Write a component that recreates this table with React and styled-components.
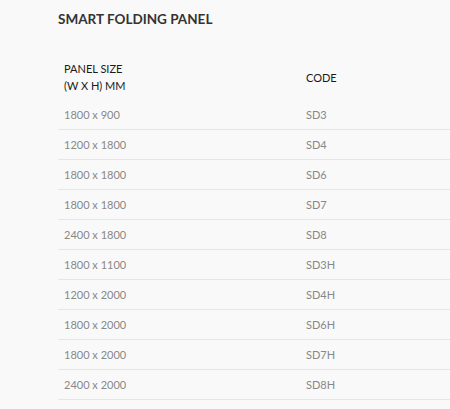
import React from 'react';
import styled, { createGlobalStyle } from 'styled-components';

const GlobalStyle = createGlobalStyle`
  html, body {
    margin: 0;
    padding: 0;
    background: #f9f9f9;
  }
  body {
    font-family: 'Lato', 'Liberation Sans', sans-serif;
  }
`;

const Section = styled.section`
  padding: 10px 0 0 58px;
  width: 450px;
  box-sizing: border-box;
  overflow: hidden;
`;

const Title = styled.h2`
  margin: 0;
  font-size: 13.5px;
  font-weight: 700;
  line-height: 18px;
  color: #333;
`;

const Table = styled.table`
  margin-top: 24px;
  width: 400px;
  table-layout: fixed;
  border-collapse: collapse;
`;

const Head = styled.th`
  text-align: left;
  font-size: 11px;
  font-weight: 400;
  line-height: 17px;
  color: #1a1a1a;
  padding: 8px 6px 6px;
  width: ${(p) => p.width || 'auto'};
  vertical-align: middle;
`;

const Row = styled.tr`
  border-bottom: 1px solid #e6e6e6;
`;

const Cell = styled.td`
  font-size: 11px;
  line-height: 13px;
  color: #888;
  padding: 8px 6px 8px;
`;

const rows = [
  ['1800 x 900', 'SD3'],
  ['1200 x 1800', 'SD4'],
  ['1800 x 1800', 'SD6'],
  ['1800 x 1800', 'SD7'],
  ['2400 x 1800', 'SD8'],
  ['1800 x 1100', 'SD3H'],
  ['1200 x 2000', 'SD4H'],
  ['1800 x 2000', 'SD6H'],
  ['1800 x 2000', 'SD7H'],
  ['2400 x 2000', 'SD8H'],
];

const App = () => {
  return (
    <>
      <GlobalStyle />
      <Section>
        <Title>SMART FOLDING PANEL</Title>
        <Table>
          <thead>
            <tr>
              <Head width="230px">
                PANEL SIZE
                <br />
                (W X H) MM
              </Head>
              <Head>CODE</Head>
            </tr>
          </thead>
          <tbody>
            {rows.map(([size, code], i) => (
              <Row key={i}>
                <Cell>{size}</Cell>
                <Cell>{code}</Cell>
              </Row>
            ))}
          </tbody>
        </Table>
      </Section>
    </>
  );
};

export default App;
